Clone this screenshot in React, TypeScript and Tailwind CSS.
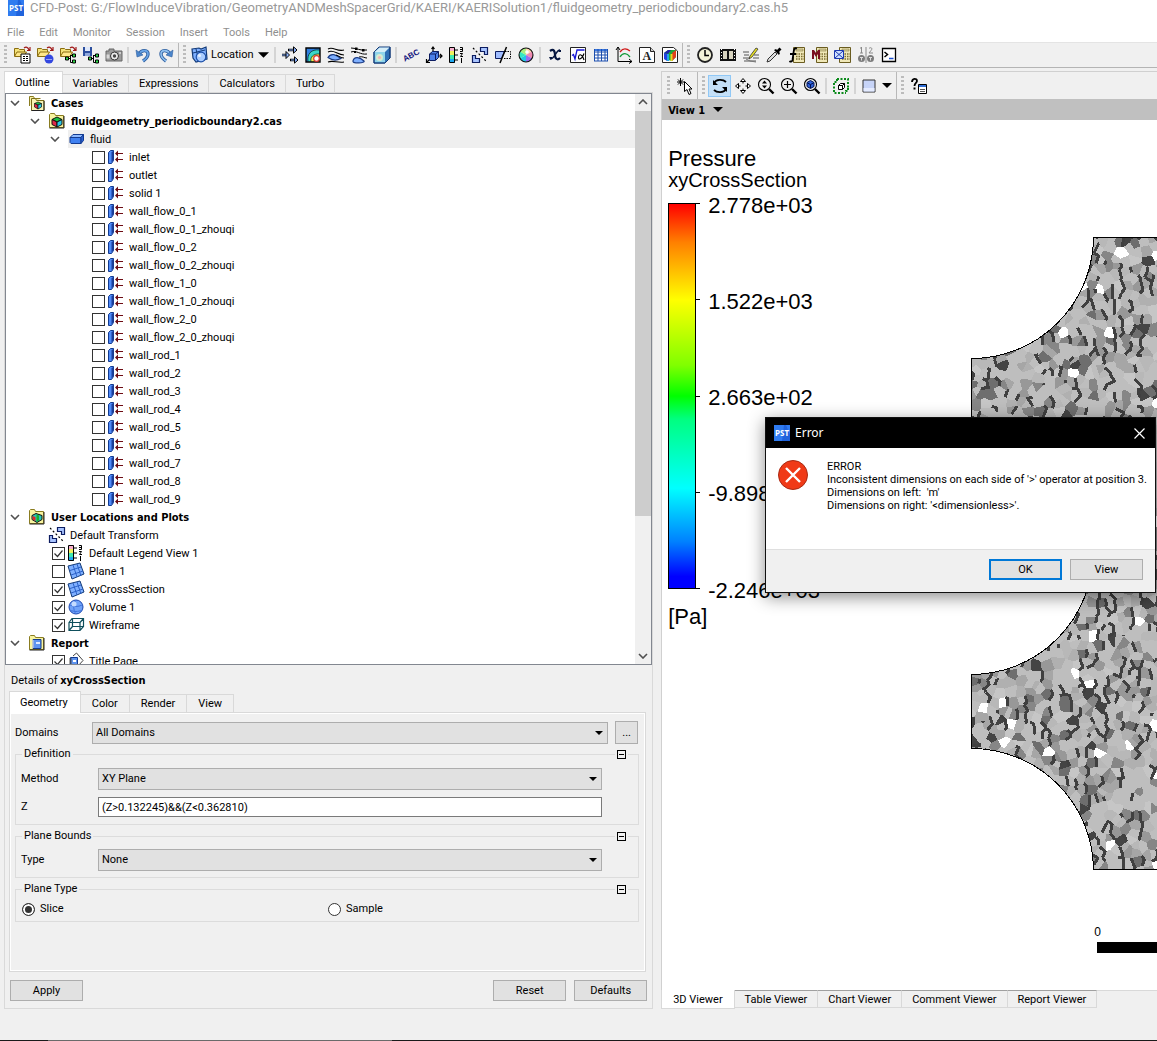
import React from 'react';

/* ---------- icons (18 x 18 grid) ---------- */

const icons: Record<string, React.ReactNode> = {
  loadCase: (
    <>
      <Folder />
      <path d="M8 8h9v9H8z" fill="#fff" stroke="#000" />
      <path d="M10 10.5h5M10 12.5h5M10 14.5h5" stroke="#000" strokeDasharray="2 1" />
    </>
  ),
  loadResults: (
    <>
      <Folder />
      <circle cx="13" cy="13" r="4.5" fill="#3347e0" />
      <path d="M10.5 13.5h5" stroke="#fff" strokeDasharray="1 1" />
    </>
  ),
  loadState: (
    <>
      <Folder />
      <StateTree />
    </>
  ),
  saveState: (
    <>
      <path d="M1 1h9v9H1z" fill="#2c4f9e" />
      <path d="M3 1h5v4H3z" fill="#dfe8fa" />
      <path d="M3 7h5v3H3z" fill="#8fa9dc" />
      <StateTree />
    </>
  ),
  camera: (
    <>
      <path d="M1 5h3V3h5v2h8v10H1z" fill="#9b9b9b" stroke="#666" />
      <path d="M1.5 8.5h3v4h-3z" fill="#d8d8d8" />
      <circle cx="9.5" cy="10" r="4" fill="#ececec" stroke="#333" />
      <circle cx="9.5" cy="10" r="1.7" fill="#444" />
      <path d="M14 7h2" stroke="#fff" />
    </>
  ),
  undo: (
    <>
      <path d="M5 8C8 3 14 4 14 8c0 3-2 5-5 7" fill="none" stroke="#2f5f9f" strokeWidth="3.4" />
      <path d="M5 8C8 3 14 4 14 8c0 3-2 5-5 7" fill="none" stroke="#6aa5e6" strokeWidth="1.6" />
      <path d="M2 4l1 7 6-2z" fill="#4b86cc" stroke="#2f5f9f" strokeWidth=".6" />
    </>
  ),
  redo: (
    <>
      <path d="M13 8C10 3 4 4 4 8c0 3 2 5 5 7" fill="none" stroke="#2f5f9f" strokeWidth="3.4" />
      <path d="M13 8C10 3 4 4 4 8c0 3 2 5 5 7" fill="none" stroke="#8fc0f0" strokeWidth="1.6" />
      <path d="M16 4l-1 7-6-2z" fill="#4b86cc" stroke="#2f5f9f" strokeWidth=".6" />
    </>
  ),
  location: (
    <>
      <path d="M2 3l7-1 2 1 5-2 1 12-11 3-3-4z" fill="#7fb0ff" stroke="#123a78" strokeWidth="1.2" />
      <path d="M3 7l12-3M6 3l3 12" stroke="#123a78" />
      <circle cx="11" cy="11" r="4.8" fill="#a9ccff" stroke="#1c4fa8" strokeWidth="1.2" />
      <circle cx="9.5" cy="9.5" r="1.5" fill="#e8f2ff" />
    </>
  ),
  vector: (
    <>
      <path d="M1 9h4M7 4h5M9 14h4" stroke="#000" strokeWidth="2.6" />
      <path d="M1 9h5M8 4h5M10 14h4" stroke="#8db4ff" />
      <path d="M5 5.5L8.5 9 5 12.5zM12.5 .8L16 4l-3.500 3.200zM13.500 10.800L17 14l-3.500 3.200z" fill="#8db4ff" stroke="#000" />
    </>
  ),
  contour: (
    <>
      <path d="M2 2h14v14H2z" fill="#2f7fe0" stroke="#000" strokeWidth="1.4" />
      <path d="M4 15.5C3 8 7 3 15.5 4v11.5z" fill="#3ad8c8" stroke="#000" strokeWidth=".6" />
      <path d="M7 15.5c-1-4 2-8 8.5-7.5v7.5z" fill="#e8ee50" stroke="#000" strokeWidth=".6" />
      <circle cx="12.5" cy="12.5" r="2.8" fill="#fff" stroke="#d33" strokeWidth="1.2" />
    </>
  ),
  streamline: (
    <>
      <path d="M1 3c5-3 9 3 16 1M1 6c6-3 9 3 16 3M1 16c5-2 9 1 16 0" fill="none" stroke="#000" strokeWidth="1.1" />
      <path d="M1 11.5c3-5 8-3 13 1-4 2-9 2-13-1z" fill="#7fb0ff" stroke="#1b3c86" strokeWidth="1.2" />
      <path d="M9 9c3 1 5 3 8 3" fill="none" stroke="#000" />
    </>
  ),
  particle: (
    <>
      <path d="M1 2c6 0 9 3 16 2M1 6c6-2 9 3 16 2M9 11c4-1 5 1 8 1" fill="none" stroke="#000" />
      <path d="M3 15c1-5 7-4 11 0 2 2-12 3-11 0z" fill="#7fb0ff" stroke="#1b3c86" strokeWidth="1.2" />
      <path d="M5 1.5h2.500v2.500H5zM12 3h2.500v2.500H12zM4 5h2v2H4z" fill="#000" />
    </>
  ),
  volume: (
    <>
      <path d="M1 6l5-5h11v11l-5 5H1z" fill="#2f6fb4" stroke="#123a78" />
      <path d="M1.5 6H12v10.5H1.5z" fill="#8fd4ea" />
      <path d="M1.5 6l5-4.500h10L12 6z" fill="#d5eef8" />
      <circle cx="6.5" cy="11.5" r="3.5" fill="#d7ecd0" />
      <circle cx="6.5" cy="11.5" r="1.6" fill="#f3b7b7" />
      <path d="M1 6v11h11l5-5V1" fill="none" stroke="#123a78" />
    </>
  ),
  label: (
    <g transform="rotate(-28 9 9)">
      <text x="9" y="12" fontSize="8" fontWeight="700" textAnchor="middle" fontFamily="Liberation Sans, sans-serif" fill="#10107c">
        ABC
      </text>
    </g>
  ),
  coordinate: (
    <>
      <path d="M8 7V1M12 10h5M6 12l-4 4M6.5 3L8 1l1.500 2M15 8l2 2-2 2M1.500 13v3.500H5" fill="none" stroke="#000" strokeWidth="1.2" />
      <path d="M4.500 8l3-2.500h6v6l-3 3h-6z" fill="#4c7fe8" stroke="#0c1c60" />
      <path d="M4.500 8h6v6M10.500 8l3-2.500" fill="none" stroke="#0c1c60" />
    </>
  ),
  legend: <LegendGlyph />,
  transform: <TransformGlyph />,
  clip: (
    <>
      <path d="M1.5 5.5h9l-3 7h-6z" fill="#9fbcff" stroke="#0c1c60" />
      <path d="M12.5 1L6 17" stroke="#000" strokeWidth="1.5" />
      <path d="M11 5.5h5.500v7H10" fill="none" stroke="#000" strokeDasharray="1.5 1" />
    </>
  ),
  colorMap: (
    <>
      <path d="M9 9V2a7 7 0 0 1 6 3.500z" fill="#ffd5b0" />
      <path d="M9 9l6-3.500a7 7 0 0 1 0 7z" fill="#f08ab0" />
      <path d="M9 9l6 3.500A7 7 0 0 1 9 16z" fill="#9b6cf0" />
      <path d="M9 9v7a7 7 0 0 1-6-3.500z" fill="#22c8e8" />
      <path d="M9 9l-6 3.500a7 7 0 0 1 0-7z" fill="#35e8c0" />
      <path d="M9 9L3 5.500A7 7 0 0 1 9 2z" fill="#a8f080" />
      <circle cx="9" cy="9" r="7" fill="none" stroke="#111" strokeWidth="1.1" />
      <circle cx="10" cy="6" r="1.800" fill="#fff" />
    </>
  ),
  variable: (
    <>
      <path d="M4 5c4-3 5 1 5 4s2 6 5 3" fill="none" stroke="#05153f" strokeWidth="2.2" />
      <path d="M14 4c-4 0-5 9-10 9" fill="none" stroke="#05153f" strokeWidth="1.5" />
      <path d="M12 4h3v2h-2zM3 11h3v2H4z" fill="#05153f" />
    </>
  ),
  expression: (
    <>
      <path d="M1.5 1.5h15v15h-15z" fill="#fff" stroke="#222" />
      <path d="M3 9.500l1.500-1L6 13l2-9h7.500" fill="none" stroke="#1414d8" strokeWidth="1.3" />
      <path d="M15 7.500c-2 6-6 7-5.500 3.500s4-3 5.500 3" fill="none" stroke="#000" strokeWidth="1.1" />
    </>
  ),
  table: (
    <>
      <path d="M2 3h14v12H2z" fill="#fff" />
      <path d="M2 3h14v2H2z" fill="#3b78e0" />
      <path d="M2.5 3v12M6 3v12M9.500 3v12M13 3v12M15.500 3v12M2 6h14M2 9h14M2 12h14M2 15h14" stroke="#1d4fae" />
    </>
  ),
  chart: (
    <>
      <path d="M3 1v14.500h14M1 4l2-3 2 3M14 13l3 2.500-3 2" fill="none" stroke="#000" />
      <path d="M5 6c3-4 6-4 10-1" fill="none" stroke="#d01818" strokeWidth="1.300" />
      <path d="M5 11c3-5 7-4 10 0" fill="none" stroke="#139a3a" strokeWidth="1.300" />
    </>
  ),
  text: (
    <>
      <path d="M1.500 1.500h11l4 4v11h-15z" fill="#fff" stroke="#222" />
      <text x="4.500" y="14" fontSize="12" fontWeight="700" fontFamily="Liberation Serif, serif" fill="#222">
        A
      </text>
      <path d="M12.500 1.500v4h4" fill="#ccc" stroke="#222" />
    </>
  ),
  figure: (
    <>
      <path d="M1.500 1.500h11L16.500 5v11.500h-15z" fill="#fff" stroke="#222" />
      <path d="M3 7l4-3h8v7l-4 4-8-2z" fill="#1ca83c" />
      <path d="M3 7l3 1v7l-3-2z" fill="#2540e0" />
      <path d="M6 8h2v7H6z" fill="#20a8e8" />
      <path d="M11 7l4-3v7l-4 4z" fill="#e04020" />
      <path d="M9.500 8h2v7h-2z" fill="#e8d820" />
      <path d="M3 7l4-3h3L7 8z" fill="#2020b0" />
    </>
  ),
  clock: (
    <>
      <circle cx="9" cy="9" r="7" fill="#f2f2d8" stroke="#222" strokeWidth="1.800" />
      <path d="M9 4v5.500h4" fill="none" stroke="#000" strokeWidth="1.500" />
    </>
  ),
  film: (
    <>
      <path d="M1 3h16v12H1z" fill="#111" />
      <path d="M4 5h4v8H4zM10 5h4v8h-4z" fill="#d8d4c0" />
      <path d="M2.500 3v12M15.500 3v12" stroke="#fff" strokeDasharray="1 2" />
    </>
  ),
  edit: (
    <>
      <path d="M1 6h6M2 9h5M1 12h7M2 15h12M11 12h6M12 9h5" stroke="#555" />
      <path d="M7 13l1-3 6-8 2 1-6 8z" fill="#e8e020" stroke="#333" strokeWidth=".8" />
      <path d="M4 13l4 2 6 1" fill="none" stroke="#777" />
    </>
  ),
  probe: (
    <>
      <path d="M2 16l1-3 7-7 2 2-7 7z" fill="#ddd" stroke="#333" />
      <path d="M9 4l5 5 1-2-1-1 2.500-2.500-2-2L12 4l-1-1z" fill="#000" />
    </>
  ),
  functionCalc: (
    <>
      <Calc />
      <path d="M9 2.500C5 1 6 6 4.500 14c-.500 2-2 2-3 1M2 8h6" fill="none" stroke="#000" strokeWidth="1.800" />
    </>
  ),
  macroCalc: (
    <>
      <Calc />
      <path d="M1 4h2l2 3 2-3h2v9H7V8L5 11 3 8v5H1z" fill="#7a1020" />
    </>
  ),
  meshCalc: (
    <>
      <Calc />
      <path d="M.5 4.500h9v8h-9z" fill="#cfe0ff" stroke="#1b38b0" />
      <path d="M1 5l8 7M9 5l-8 7" stroke="#1b38b0" />
    </>
  ),
  compare: (
    <>
      <path d="M4.500 1v6M3 2h1.500M3 7h3M12 2.500c2-2 4 0 2 2L12 7h4M9 1v16" fill="none" stroke="#8a8a8a" />
      <circle cx="4.500" cy="12.500" r="3.500" fill="#7c7c7c" />
      <circle cx="13.500" cy="12.500" r="3.500" fill="#7c7c7c" />
      <path d="M3 11.500h3M4.500 11.500v3M12 11.500h3M13.500 11.500v3" fill="none" stroke="#ddd" />
    </>
  ),
  command: (
    <>
      <path d="M2.500 2.500h13v13h-13z" fill="#fff" stroke="#000" strokeWidth="1.300" />
      <path d="M4.500 6l3 2.500-3 2.500" fill="none" stroke="#000" strokeWidth="1.500" />
      <path d="M9 12.500h4.500" stroke="#1b4fd0" strokeWidth="1.500" />
    </>
  ),
  select: (
    <>
      <path d="M4.500 1v8M1 5h7M2 2.500l5 5M7 2.500l-5 5" stroke="#000" />
      <path d="M8.500 4.500v10l2.500-2 2 5 2-1-2-4.500h3z" fill="#fff" stroke="#000" />
    </>
  ),
  rotate: (
    <>
      <path d="M3 6c2-4 9-4 12-1M15 12c-2 4-9 4-12 1" fill="none" stroke="#000" strokeWidth="1.800" />
      <path d="M2 3v5h5zM16 15v-5h-5z" fill="#000" />
    </>
  ),
  pan: (
    <>
      <path d="M9 3v3.500M9 11.500V15M3 9h3.500M11.500 9H15" stroke="#000" />
      <path d="M9 1.500l2.500 3h-5zM9 16.500l2.500-3h-5zM1.500 9l3-2.500v5zM16.500 9l-3-2.500v5z" fill="#fff" stroke="#000" />
    </>
  ),
  zoom: (
    <>
      <Lens />
      <path d="M7.500 3.500L10 6.500H5zM7.500 11.500L10 8.500H5z" fill="#000" />
    </>
  ),
  zoomBox: (
    <>
      <Lens />
      <path d="M7.500 4v7M4 7.500h7" stroke="#000" strokeWidth="1.200" />
    </>
  ),
  fit: (
    <>
      <Lens />
      <path d="M7.500 3.500l3.500 2v4l-3.500 2-3.500-2v-4z" fill="#2f62d8" stroke="#001050" />
      <path d="M4.500 6l3 1.500 3-1.500M7.500 7.500V11" fill="none" stroke="#001050" />
    </>
  ),
  highlight: (
    <>
      <path d="M5 2h11v9M2 6v10h12M5 2v3H2M16 11v3h-2v2" fill="none" stroke="#0a8a1a" strokeWidth="2" strokeDasharray="2 1.500" />
      <path d="M6.500 8.500l2-2h4v4l-2 2h-4zM6.500 8.500h4v4M10.500 8.500l2-2" fill="#fff" stroke="#000" />
    </>
  ),
  viewport: (
    <>
      <path d="M3 3h12v12H3z" fill="#c7d4f8" stroke="#333" />
      <path d="M3.500 11h11v3.500h-11z" fill="#e4ebff" />
    </>
  ),
  help: (
    <>
      <path d="M2 5c0-4 5-4 5-1 0 2-2.500 2-2.500 5" fill="none" stroke="#000" strokeWidth="1.800" />
      <path d="M3.500 10.500h2v2h-2z" fill="#000" />
      <path d="M8.500 7.500h8v9h-8z" fill="#fff" stroke="#000" />
      <path d="M9 8h7v2H9z" fill="#2f6fd8" />
      <path d="M10 12.500h5M10 14.500h5" stroke="#555" />
    </>
  ),
  cases: (
    <>
      <path d="M1.500 12V2.500h4l1 2h6" fill="#f5f1a8" stroke="#8a7c20" />
      <path d="M3.500 4.500h4l1 2h7.500v10H3.500z" fill="#f8f4b4" stroke="#7a6c18" />
      <path d="M16 7v9.500H3.500" fill="none" stroke="#222" />
      <path d="M6.500 9.500L10 8l3.500 1.500L10 11z" fill="#18c040" stroke="#111" strokeWidth=".7" />
      <path d="M6.500 9.500L10 11v4l-3.500-2z" fill="#e02848" stroke="#111" strokeWidth=".7" />
      <path d="M13.500 9.500L10 11v4l3.500-2z" fill="#28c8e8" stroke="#111" strokeWidth=".7" />
    </>
  ),
  caseFile: (
    <>
      <FileFolder />
      <path d="M4 7.500L9 5l5 2.500-5 2.500z" fill="#18c040" stroke="#111" />
      <path d="M4 7.500L9 10v5l-5-2.500z" fill="#e02848" stroke="#111" />
      <path d="M14 7.500L9 10v5l5-2.500z" fill="#28c8e8" stroke="#111" />
    </>
  ),
  userPlots: (
    <>
      <FileFolder />
      <path d="M4 7.500L8 5.500l6 2v4l-5 3-5-3z" fill="#28c8b8" stroke="#111" />
      <path d="M4.500 8l3 1v4l-3-1.500z" fill="#e02828" />
      <path d="M8.500 6.500l2.500 1v5l-2.500 1.500z" fill="#18b030" />
    </>
  ),
  report: (
    <>
      <FileFolder />
      <path d="M5 5.500h8v9H5z" fill="#5e94f0" stroke="#123a90" />
      <path d="M4 7h2M4 9h2M4 11h2M4 13h2" stroke="#fff" />
      <path d="M8 8h4v2H8z" fill="#dfe9ff" />
    </>
  ),
  domain: (
    <>
      <path d="M2 7.500l3-3h10.500l-2.500 3z" fill="#8cb8ff" stroke="#123a90" />
      <path d="M2 7.500h11v6H3l-1-1z" fill="#3f80f0" stroke="#123a90" />
      <path d="M13 7.500l2.500-3v6l-2.500 3z" fill="#2a5fd0" stroke="#123a90" />
    </>
  ),
  boundary: (
    <>
      <path d="M1.500 4.500l2-2h3v10l-2 3h-3z" fill="#4f8af8" stroke="#123a90" />
      <path d="M4.500 4.500v10l2-2.500v-9.500z" fill="#1c3f9a" />
      <path d="M9 5.500h7M9 11.500h7" stroke="#6d0c14" strokeWidth="1.200" />
      <path d="M11 2.500v6l-3-3zM11 8.500v6l-3-3z" fill="#6d0c14" />
    </>
  ),
  plane: (
    <>
      <path d="M1 4l12-3 4 11-12 5z" fill="#7fb0ff" stroke="#123a78" />
      <path d="M3 8.500l11-3.500M4 13l12-4M6 3l4 12M10 2l4 12" stroke="#2c62c8" />
    </>
  ),
  sphere: (
    <>
      <circle cx="9" cy="9" r="7" fill="#6fa2f8" stroke="#1c48b0" />
      <path d="M3 7c4 2 8 2 12 0M3 12c4 2 8 2 12 0M9 2c-3 4-3 10 0 14" fill="none" stroke="#3f74dc" />
      <circle cx="7" cy="6" r="2.500" fill="#c5dcff" />
    </>
  ),
  wireframe: (
    <path
      d="M2 6.500l3-4h11.500v8l-3.500 4H2zM2 6.500h11v8M13 6.500l3.500-4M5.500 3v7.500h11M5.500 10.500L2 14.500"
      fill="none"
      stroke="#0f4f5c"
      strokeWidth="1.200"
    />
  ),
  titlePage: (
    <>
      <path d="M6 4l3.500-3L16 8.500 11 14" fill="none" stroke="#444" />
      <path d="M3.500 5.500h7v8h-7z" fill="#5e94f0" stroke="#123a90" />
      <path d="M2 7h3M2 9h3M2 11h3" stroke="#555" />
      <path d="M6 8h3v2H6z" fill="#fff" />
    </>
  ),
};

function Folder() {
  return (
    <>
      <path d="M1.500 10V2.500h4l1 1h5V6" fill="#f4e27a" stroke="#8a6d10" />
      <path d="M1.500 10.500L4 6h9.500l-2.500 4.500z" fill="#ffe88a" stroke="#8a6d10" />
      <path d="M11 2c2-1.500 4-1 5 2M17 1v3.500h-3" fill="none" stroke="#a01818" strokeWidth="1.200" />
    </>
  );
}

function FileFolder() {
  return (
    <>
      <path d="M1.500 15.500v-13l1-1h4l1 2h8v12z" fill="#f8f4a0" stroke="#8a7c20" />
      <path d="M16 4v12H1.500" fill="none" stroke="#222" />
    </>
  );
}

function StateTree() {
  return (
    <>
      <path d="M8 12.500h4M11.500 9.500h2M11.500 9v7.500h2" fill="none" stroke="#000" />
      <path d="M6.500 11h3v3h-3zM13.500 8h3v3h-3zM13.500 14h3v3h-3z" fill="#2fe04a" stroke="#000" />
    </>
  );
}

function Calc() {
  return (
    <>
      <path d="M5.500 1.500h11v15h-11z" fill="#f0e8b8" stroke="#6a5c20" />
      <path d="M8 3h7v2H8z" fill="#d8d0a0" stroke="#8a7c40" strokeWidth=".6" />
      <path d="M8 8h8M8 10.500h8M8 13h8" stroke="#7a6c30" strokeDasharray="1.500 1" strokeWidth="1.300" />
    </>
  );
}

function Lens() {
  return (
    <>
      <circle cx="7.500" cy="7.500" r="6" fill="#f0f0f0" stroke="#000" strokeWidth="1.100" />
      <path d="M12 12l4.500 4.500" stroke="#000" strokeWidth="2.400" />
    </>
  );
}

function LegendGlyph() {
  return (
    <>
      <path d="M2 1h5v4H2z" fill="#f8b0d0" />
      <path d="M2 5h5v4H2z" fill="#f0f060" />
      <path d="M2 9h5v4H2z" fill="#40e8b0" />
      <path d="M2 13h5v4H2z" fill="#20a8f0" />
      <path d="M1.500 1.500h5v15h-5zM7 4h3M7 9h3M7 14h3" fill="none" stroke="#000" />
      <path d="M12 1.500h2.500v4H12M12 3.500h2.500M12 7.500h2.500l-2 3h2.500M13.500 12v5" fill="none" stroke="#000" />
    </>
  );
}

function TransformGlyph() {
  return (
    <>
      <path d="M9.500 1.500h7v7h-3v-3h-4z" fill="#a8c4ff" stroke="#0c1c60" strokeWidth="1.200" />
      <path d="M1.500 9.500h3v3h4v4h-7z" fill="#a8c4ff" stroke="#0c1c60" strokeWidth="1.200" />
      <path d="M2 2l14 14" stroke="#000" strokeWidth="1.200" strokeDasharray="2 2" />
    </>
  );
}

function Icon({ name, className = '' }: { name: string; className?: string }) {
  return (
    <svg viewBox="0 0 18 18" className={`size-[18px] shrink-0 ${className}`} aria-hidden="true">
      {icons[name]}
    </svg>
  );
}

function AppLogo() {
  return (
    <svg viewBox="0 0 16 16" className="size-4 shrink-0" aria-hidden="true">
      <path d="M0 0h16v16H0z" fill="#2f7bf0" />
      <path d="M10 0h2l4 10v6H8z" fill="#2063dc" />
      <text x="8" y="11" fontSize="8" fontWeight="700" textAnchor="middle" fontFamily="Noto Sans, sans-serif" fill="#fff">
        PST
      </text>
    </svg>
  );
}

/* ---------- toolbar parts ---------- */

function Grip() {
  return <span className="mr-[3px] ml-1 h-5 w-[3px] shrink-0 bg-[linear-gradient(#bcbcbc_2px,transparent_2px)] bg-[length:3px_4px]" />;
}

function Separator() {
  return <span className="mx-0.5 h-4 w-0.5 shrink-0 bg-[#d4d4d4]" />;
}

function ToolButton({ name, active }: { name: string; active?: boolean }) {
  return (
    <button
      type="button"
      aria-label={name}
      className={`flex h-[22px] w-[23px] shrink-0 items-center justify-center ${active ? 'border border-[#90c8f6] bg-[#c5e0f7]' : ''}`}
    >
      <Icon name={name} />
    </button>
  );
}

function ToolGroup({ names }: { names: string[] }) {
  return (
    <>
      {names.map((n) => (
        <ToolButton key={n} name={n} />
      ))}
    </>
  );
}

function Triangle({ className }: { className: string }) {
  return (
    <svg viewBox="0 0 10 5" className={`shrink-0 ${className}`} aria-hidden="true">
      <path d="M0 0h10L5 5z" fill="#000" />
    </svg>
  );
}

/* ---------- outline tree ---------- */

interface TreeItem {
  label: string;
  icon: string;
  kind: 'root' | 'case' | 'domain' | 'boundary' | 'plain' | 'object';
  checked?: boolean;
}

const boundaries = [
  'inlet', 'outlet', 'solid 1',
  'wall_flow_0_1', 'wall_flow_0_1_zhouqi', 'wall_flow_0_2', 'wall_flow_0_2_zhouqi',
  'wall_flow_1_0', 'wall_flow_1_0_zhouqi', 'wall_flow_2_0', 'wall_flow_2_0_zhouqi',
  'wall_rod_1', 'wall_rod_2', 'wall_rod_3', 'wall_rod_4', 'wall_rod_5',
  'wall_rod_6', 'wall_rod_7', 'wall_rod_8', 'wall_rod_9',
];

const tree: TreeItem[] = [
  { label: 'Cases', icon: 'cases', kind: 'root' },
  { label: 'fluidgeometry_periodicboundary2.cas', icon: 'caseFile', kind: 'case' },
  { label: 'fluid', icon: 'domain', kind: 'domain' },
  ...boundaries.map((label): TreeItem => ({ label, icon: 'boundary', kind: 'boundary', checked: false })),
  { label: 'User Locations and Plots', icon: 'userPlots', kind: 'root' },
  { label: 'Default Transform', icon: 'transform', kind: 'plain' },
  { label: 'Default Legend View 1', icon: 'legend', kind: 'object', checked: true },
  { label: 'Plane 1', icon: 'plane', kind: 'object', checked: false },
  { label: 'xyCrossSection', icon: 'plane', kind: 'object', checked: true },
  { label: 'Volume 1', icon: 'sphere', kind: 'object', checked: true },
  { label: 'Wireframe', icon: 'wireframe', kind: 'object', checked: true },
  { label: 'Report', icon: 'report', kind: 'root' },
  { label: 'Title Page', icon: 'titlePage', kind: 'object', checked: true },
];

const indent = {
  root: 'pl-1',
  case: 'pl-6',
  domain: 'pl-11',
  boundary: 'pl-[86px]',
  plain: 'pl-[42px]',
  object: 'pl-[46px]',
};

const boldText = "font-['DejaVu_Sans_Condensed',Roboto,sans-serif] font-bold";

function Chevron({ up }: { up?: boolean }) {
  return (
    <svg viewBox="0 0 10 6" className="h-1.5 w-2.5 shrink-0" aria-hidden="true">
      <path d={up ? 'M1 5l4-4 4 4' : 'M1 1l4 4 4-4'} fill="none" stroke="#505050" strokeWidth="1.600" />
    </svg>
  );
}

function TreeRow({ item }: { item: TreeItem }) {
  const expandable = item.kind === 'root' || item.kind === 'case' || item.kind === 'domain';
  const bold = item.kind === 'root' || item.kind === 'case';

  return (
    <li className={`flex h-[18px] items-center ${indent[item.kind]}`}>
      {expandable && (
        <button type="button" aria-label={`Collapse ${item.label}`} className="mr-2 shrink-0">
          <Chevron />
        </button>
      )}
      <label
        className={`flex h-full items-center ${item.kind === 'domain' ? 'flex-1 bg-[#efefef]' : ''} ${bold ? boldText : ''}`}
      >
        {item.checked !== undefined && (
          <span className="mr-0.5 grid size-[13px] place-items-center">
            <input
              type="checkbox"
              defaultChecked={item.checked}
              className="peer col-start-1 row-start-1 size-[13px] appearance-none border border-[#333] bg-white"
            />
            <svg viewBox="0 0 13 13" className="pointer-events-none col-start-1 row-start-1 hidden size-[13px] peer-checked:block">
              <path d="M2.500 6.500l3 3 5-6" fill="none" stroke="#333" strokeWidth="1.200" />
            </svg>
          </span>
        )}
        <Icon name={item.icon} className={bold ? 'mr-[5px]' : 'mr-1'} />
        <span className="pt-0.5">{item.label}</span>
      </label>
    </li>
  );
}

/* ---------- tabs ---------- */

function Tabs({ items, label, wide }: { items: string[]; label: string; wide?: boolean }) {
  return (
    <div role="tablist" aria-label={label} className="relative z-10 -mb-px flex items-end">
      {items.map((t, i) => (
        <button
          key={t}
          type="button"
          role="tab"
          aria-selected={i === 0}
          className={
            i === 0
              ? 'h-[22px] border border-b-0 border-[#d9d9d9] bg-white pr-3 pl-2.5'
              : `h-[19px] border border-l-0 border-[#d9d9d9] ${wide ? 'px-[11px]' : 'px-2.5'}`
          }
        >
          {t}
        </button>
      ))}
    </div>
  );
}

/* ---------- details form ---------- */

function Combo({ id, value }: { id: string; value: string }) {
  return (
    <span className="grid flex-1 items-center">
      <select id={id} className="col-start-1 row-start-1 h-[22px] w-full appearance-none border border-[#adadad] bg-[#e1e1e1] px-[3px]">
        <option>{value}</option>
      </select>
      <Triangle className="pointer-events-none col-start-1 row-start-1 mr-[5px] h-1 w-2 justify-self-end" />
    </span>
  );
}

function Group({ title, children }: { title: string; children: React.ReactNode }) {
  return (
    <section className="relative" aria-label={title}>
      <h3 className="flex h-3.5 items-center leading-[14px]">
        <span className="w-[7px] border-t border-[#dcdcdc]" />
        <span className="px-0.5">{title}</span>
        <span className="flex-1 border-t border-[#dcdcdc]" />
        <button type="button" aria-label={`Collapse ${title}`} className="mx-0.5 flex size-[9px] items-center justify-center border border-black">
          <span className="h-px w-[5px] bg-black" />
        </button>
        <span className="w-[11px] border-t border-[#dcdcdc]" />
      </h3>
      <div className="-mt-[7px] border border-t-0 border-[#dcdcdc]">{children}</div>
    </section>
  );
}

function PushButton({ children, primary }: { children: React.ReactNode; primary?: boolean }) {
  return (
    <button
      type="button"
      className={`h-[21px] w-[73px] bg-[#e1e1e1] ${primary ? 'border-2 border-[#0078d7]' : 'border border-[#adadad]'}`}
    >
      {children}
    </button>
  );
}

function Details() {
  return (
    <div className="px-1 pb-[7px]">
      <h2 className="pt-2 pb-0.5 pl-0.5 leading-4">
        Details of <b className={boldText}>xyCrossSection</b>
      </h2>
      <Tabs label="Details" items={['Geometry', 'Color', 'Render', 'View']} wide />
      <form className="mr-0.5 flex h-[260px] flex-col border border-[#d9d9d9] p-[5px] pt-2 ring-1 ring-white ring-inset">
        <div className="flex items-center pr-0.5">
          <label htmlFor="domains" className="w-[77px]">
            Domains
          </label>
          <Combo id="domains" value="All Domains" />
          <button type="button" className="ml-[7px] h-[23px] w-[23px] border border-[#adadad] bg-[#e1e1e1]">
            ...
          </button>
        </div>
        <div className="mt-[3px] flex flex-col gap-1 pr-px">
          <Group title="Definition">
            <div className="flex flex-col gap-[7px] pt-3.5 pr-9 pb-[7px] pl-[5px]">
              <div className="flex items-center">
                <label htmlFor="method" className="w-[77px]">
                  Method
                </label>
                <Combo id="method" value="XY Plane" />
              </div>
              <div className="flex items-center">
                <label htmlFor="z" className="w-[77px]">
                  Z
                </label>
                <input
                  id="z"
                  defaultValue="(Z>0.132245)&&(Z<0.362810)"
                  className="h-5 min-w-0 flex-1 border border-[#7a7a7a] bg-white px-[3px]"
                />
              </div>
            </div>
          </Group>
          <Group title="Plane Bounds">
            <div className="flex items-center pt-[13px] pr-9 pb-1.5 pl-[5px]">
              <label htmlFor="type" className="w-[77px]">
                Type
              </label>
              <Combo id="type" value="None" />
            </div>
          </Group>
          <Group title="Plane Type">
            <div className="grid grid-cols-2 pt-3 pr-1 pb-1 pl-1.5">
              {['Slice', 'Sample'].map((t, i) => (
                <label key={t} className="flex items-center gap-[5px]">
                  <input
                    type="radio"
                    name="planeType"
                    defaultChecked={i === 0}
                    className="size-[13px] appearance-none rounded-full border border-[#333] bg-white checked:bg-[#333] checked:shadow-[inset_0_0_0_2px_#fff]"
                  />
                  {t}
                </label>
              ))}
            </div>
          </Group>
        </div>
      </form>
      <div className="mt-2 flex gap-2 px-px">
        <PushButton>Apply</PushButton>
        <span className="flex-1" />
        <PushButton>Reset</PushButton>
        <PushButton>Defaults</PushButton>
      </div>
    </div>
  );
}

/* ---------- cross-section mesh ---------- */

type Pt = [number, number];

const MESH_W = 190;
const MESH_H = 633;
const CELL = 9;

function random(seed: number) {
  let s = seed;
  return () => {
    s = (s + 0x6d2b79f5) | 0;
    let t = Math.imul(s ^ (s >>> 15), 1 | s);
    t = (t + Math.imul(t ^ (t >>> 7), 61 | t)) ^ t;
    return ((t ^ (t >>> 14)) >>> 0) / 4294967296;
  };
}

// keep the part of poly that is nearer to a than to b
function clip(poly: Pt[], a: Pt, b: Pt): Pt[] {
  const side = (p: Pt) => (p[0] - (a[0] + b[0]) / 2) * (b[0] - a[0]) + (p[1] - (a[1] + b[1]) / 2) * (b[1] - a[1]);
  const out: Pt[] = [];
  poly.forEach((p, i) => {
    const q = poly[(i + 1) % poly.length];
    const sp = side(p);
    const sq = side(q);
    if (sp <= 0) out.push(p);
    if (sp < 0 !== sq < 0) {
      const t = sp / (sp - sq);
      out.push([p[0] + (q[0] - p[0]) * t, p[1] + (q[1] - p[1]) * t]);
    }
  });
  return out;
}

const shades = ['#bebebe', '#bebebe', '#bebebe', '#bebebe', '#bebebe', '#b8b8b8', '#b0b0b0', '#a6a6a6', '#989898', '#868686', '#6e6e6e', '#c6c6c6'];

function buildMesh() {
  const rnd = random(11);
  const cols = Math.ceil(MESH_W / CELL) + 2;
  const rows = Math.ceil(MESH_H / CELL) + 2;
  const sites: Pt[][] = [];
  for (let r = 0; r < rows; r++) {
    sites.push([]);
    for (let c = 0; c < cols; c++) sites[r].push([(c - 1 + rnd() * 0.9) * CELL, (r - 1 + rnd() * 0.9) * CELL]);
  }

  const cells: { d: string; fill: string }[] = [];
  let dark = '';
  sites.forEach((row, r) =>
    row.forEach((s, c) => {
      let poly: Pt[] = [[s[0] - 14, s[1] - 14], [s[0] + 14, s[1] - 14], [s[0] + 14, s[1] + 14], [s[0] - 14, s[1] + 14]];
      for (let dr = -2; dr <= 2; dr++)
        for (let dc = -2; dc <= 2; dc++) {
          const n = sites[r + dr]?.[c + dc];
          if (n && n !== s) poly = clip(poly, s, n);
        }
      const pts = poly.map((p) => `${p[0].toFixed(1)} ${p[1].toFixed(1)}`);
      const pick = rnd();
      const shade = shades[Math.floor(rnd() * shades.length)];
      cells.push({ d: `M${pts.join('L')}z`, fill: pick < 0.04 ? '#ffffff' : pick < 0.07 ? '#444444' : shade });
      // grain walls run down the right-hand side of a cell
      if (rnd() < 0.34) {
        const near = poly.filter((p) => p[0] > s[0]).sort((p, q) => p[1] - q[1]);
        if (near.length > 1) dark += `M${near.map((p) => `${p[0].toFixed(1)} ${p[1].toFixed(1)}`).join('L')}`;
      }
    }),
  );
  return { cells, dark };
}

const mesh = buildMesh();

// two channels stacked, each with rod cut-outs of radius 122 on the left
const outline =
  'M200 .5H122.500A122 122 0 0 1 .5 121.500V195A122 122 0 0 1 122 316.500A122 122 0 0 1 .5 437.500V511.500A122 122 0 0 1 122.500 632.500H200';

function CrossSection() {
  return (
    <svg viewBox={`0 0 ${MESH_W} ${MESH_H}`} className="absolute top-[117px] left-[309px] h-[633px] w-[190px]" shapeRendering="crispEdges" role="img" aria-label="Cross section mesh">
      <clipPath id="channel">
        <path d={outline} />
      </clipPath>
      <g clipPath="url(#channel)">
        <path d="M0 0h190v633H0z" fill="#bebebe" />
        {mesh.cells.map((c, i) => (
          <path key={i} d={c.d} fill={c.fill} />
        ))}
        <path d={mesh.dark} fill="none" stroke="#404040" strokeWidth="3" strokeLinejoin="round" />
      </g>
      <path d={outline} fill="none" stroke="#000" />
    </svg>
  );
}

/* ---------- viewer ---------- */

const ticks = ['2.778e+03', '1.522e+03', '2.663e+02', '-9.898e+02', '-2.246e+03'];

function Legend() {
  return (
    <div className="pt-7 pl-1.5 font-['Liberation_Sans',Arial,sans-serif] text-[22px] leading-[22px]">
      <p>Pressure</p>
      <p className="text-[20px] leading-5">xyCrossSection</p>
      <div className="mt-[13px] flex h-[386px]">
        <div className="w-7 border border-black bg-[linear-gradient(#ff0000,#ff8000_10%,#ffff00_25%,#80ff00_42%,#00ff00_50%,#00ff80_56%,#00ffff_74%,#0080ff_88%,#0000ff_97%)]" />
        <ul className="flex flex-col justify-between">
          {ticks.map((t) => (
            <li key={t} className="flex h-px items-center gap-2">
              <span className="h-px w-1 bg-black" />
              <span className="pt-1">{t}</span>
            </li>
          ))}
        </ul>
      </div>
      <p className="mt-[17px]">[Pa]</p>
    </div>
  );
}

function Viewer() {
  return (
    <section className="flex min-w-0 flex-1 flex-col">
      <div className="mt-[3px] flex flex-1 flex-col border-t border-l border-[#d0d0d0] bg-white">
        <div className="flex h-[27px] items-center bg-[#f0f0f0]">
          <div className="flex h-full items-center border-r border-[#b8b8b8] px-px">
            <Grip />
            <ToolButton name="select" />
          </div>
          <div className="flex h-full items-center border-r border-[#b8b8b8] pr-0.5">
            <Grip />
            <ToolButton name="rotate" active />
            <ToolGroup names={['pan', 'zoom', 'zoomBox', 'fit']} />
            <Separator />
            <ToolButton name="highlight" />
            <Separator />
            <button type="button" aria-label="Viewport layout" className="flex items-center gap-1 px-0.5">
              <Icon name="viewport" />
              <Triangle className="h-[5px] w-2.5" />
            </button>
          </div>
          <Grip />
          <ToolButton name="help" />
        </div>
        <button type="button" className={`flex h-[21px] items-center gap-2 bg-[#c0c0c0] px-1.5 ${boldText}`}>
          <span className="pt-0.5">View 1</span>
          <Triangle className="h-[5px] w-2.5" />
        </button>
        <div className="relative flex-1 overflow-hidden">
          <Legend />
          <CrossSection />
          <div className="absolute top-[806px] right-0 left-[432px] font-['Liberation_Sans',Arial,sans-serif] text-[12px] leading-3">
            0
            <div className="mt-1 ml-[3px] h-[11px] bg-black" />
          </div>
        </div>
      </div>
      <div role="tablist" aria-label="Viewers" className="flex h-[19px] items-start">
        <button type="button" role="tab" aria-selected="true" className="h-[19px] border border-t-0 border-[#d9d9d9] bg-white px-[11px] pt-0.5">
          3D Viewer
        </button>
        {['Table Viewer', 'Chart Viewer', 'Comment Viewer', 'Report Viewer'].map((t) => (
          <button key={t} type="button" role="tab" aria-selected="false" className="h-[18px] border-t border-r border-b border-[#d9d9d9] border-t-[#a0a0a0] px-2.5 pt-px">
            {t}
          </button>
        ))}
        <span className="flex-1 border-t border-[#d9d9d9]" />
      </div>
    </section>
  );
}

/* ---------- error window ---------- */

function ErrorDialog() {
  return (
    <div
      role="dialog"
      aria-labelledby="error-title"
      className="absolute top-[417px] left-[765px] z-20 w-[391px] border border-[#111] bg-white shadow-[0_4px_16px_rgba(0,0,0,0.45)]"
    >
      <header className="flex h-[30px] items-center bg-black pr-2.5 pl-2 text-white">
        <AppLogo />
        <h2 id="error-title" className="ml-[5px] flex-1 font-['Noto_Sans','Open_Sans',sans-serif] text-[12px]">
          Error
        </h2>
        <button type="button" aria-label="Close">
          <svg viewBox="0 0 11 11" className="size-[11px]">
            <path d="M.5 .5l10 10M10.500 .5l-10 10" stroke="#fff" strokeWidth="1.200" />
          </svg>
        </button>
      </header>
      <div className="flex h-[101px] gap-[19px] px-3 pt-3">
        <svg viewBox="0 0 30 30" className="size-[30px] shrink-0" aria-hidden="true">
          <circle cx="15" cy="15" r="14.500" fill="#f03a17" stroke="#a82a14" />
          <path d="M8 8l14 14M22 8L8 22" stroke="#fff" strokeWidth="2.400" />
        </svg>
        <div className="leading-[13px] whitespace-pre">
          <p>ERROR</p>
          <p>Inconsistent dimensions on each side of '&gt;' operator at position 3.</p>
          <p>{"Dimensions on left:  'm'"}</p>
          <p>Dimensions on right: '&lt;dimensionless&gt;'.</p>
        </div>
      </div>
      <footer className="flex justify-end gap-2 border-t border-[#dfdfdf] bg-[#f0f0f0] px-3 pt-[9px] pb-3">
        <PushButton primary>OK</PushButton>
        <PushButton>View</PushButton>
      </footer>
    </div>
  );
}

/* ---------- page ---------- */

export default function App() {
  return (
    <div className="relative flex h-screen min-h-[1041px] flex-col overflow-hidden bg-[#f0f0f0] font-[Roboto,'DejaVu_Sans_Condensed',sans-serif] text-[11px] leading-4 text-black">
      <header className="bg-white text-[#8f8f8f]">
        <div className="flex h-6 items-start gap-1.5 pl-2">
          <AppLogo />
          <h1 className="text-[13px] leading-4 whitespace-nowrap text-[#999]">
            CFD-Post: G:/FlowInduceVibration/GeometryANDMeshSpacerGrid/KAERI/KAERISolution1/fluidgeometry_periodicboundary2.cas.h5
          </h1>
        </div>
        <nav className="flex h-[18px] items-center gap-[15px] pl-[7px]">
          {['File', 'Edit', 'Monitor', 'Session', 'Insert', 'Tools', 'Help'].map((m) => (
            <button key={m} type="button">
              {m}
            </button>
          ))}
        </nav>
      </header>

      <div className="flex h-[26px] items-center border-t border-b border-t-[#e4e4e4] border-b-[#b4b4b4]">
        <div className="flex h-full items-center border-r border-[#b8b8b8] pr-px">
          <Grip />
          <ToolGroup names={['loadCase', 'loadResults', 'loadState', 'saveState', 'camera']} />
          <Separator />
          <ToolGroup names={['undo', 'redo']} />
        </div>
        <div className="flex h-full items-center border-r border-[#b8b8b8] pr-px">
          <Grip />
          <button type="button" className="flex w-[83px] items-center gap-[3px] pl-px">
            <Icon name="location" />
            Location
            <Triangle className="ml-px h-1.5 w-[11px]" />
          </button>
          <Separator />
          <ToolGroup names={['vector', 'contour', 'streamline', 'particle', 'volume']} />
          <Separator />
          <ToolGroup names={['label', 'coordinate', 'legend', 'transform', 'clip', 'colorMap']} />
          <Separator />
          <ToolGroup names={['variable', 'expression', 'table', 'chart', 'text', 'figure']} />
        </div>
        <Grip />
        <ToolGroup names={['clock', 'film', 'edit', 'probe', 'functionCalc', 'macroCalc', 'meshCalc', 'compare', 'command']} />
      </div>

      <main className="flex min-h-0 flex-1 pb-8">
        <section className="flex w-4/7 shrink-0 flex-col pt-[3px] pr-2 pl-1">
          <Tabs label="Workspace" items={['Outline', 'Variables', 'Expressions', 'Calculators', 'Turbo']} />
          <div className="flex min-h-0 flex-1 flex-col border border-[#d9d9d9]">
            <div className="flex min-h-0 flex-1 border border-[#828790] bg-white">
              <ul className="flex-1 overflow-hidden">
                {tree.map((item) => (
                  <TreeRow key={item.label} item={item} />
                ))}
              </ul>
              <div className="flex w-4 flex-col items-center bg-[#f0f0f0] py-[5px]">
                <Chevron up />
                <div className="mt-1.5 h-[405px] w-full bg-[#cdcdcd]" />
                <span className="flex-1" />
                <Chevron />
              </div>
            </div>
            <Details />
          </div>
        </section>
        <Viewer />
      </main>

      <ErrorDialog />
      <div className="absolute inset-x-0 bottom-0 flex h-px bg-[#1a1a1a]">
        <span className="ml-12 w-[344px] bg-[#6a6a6a]" />
      </div>
    </div>
  );
}
